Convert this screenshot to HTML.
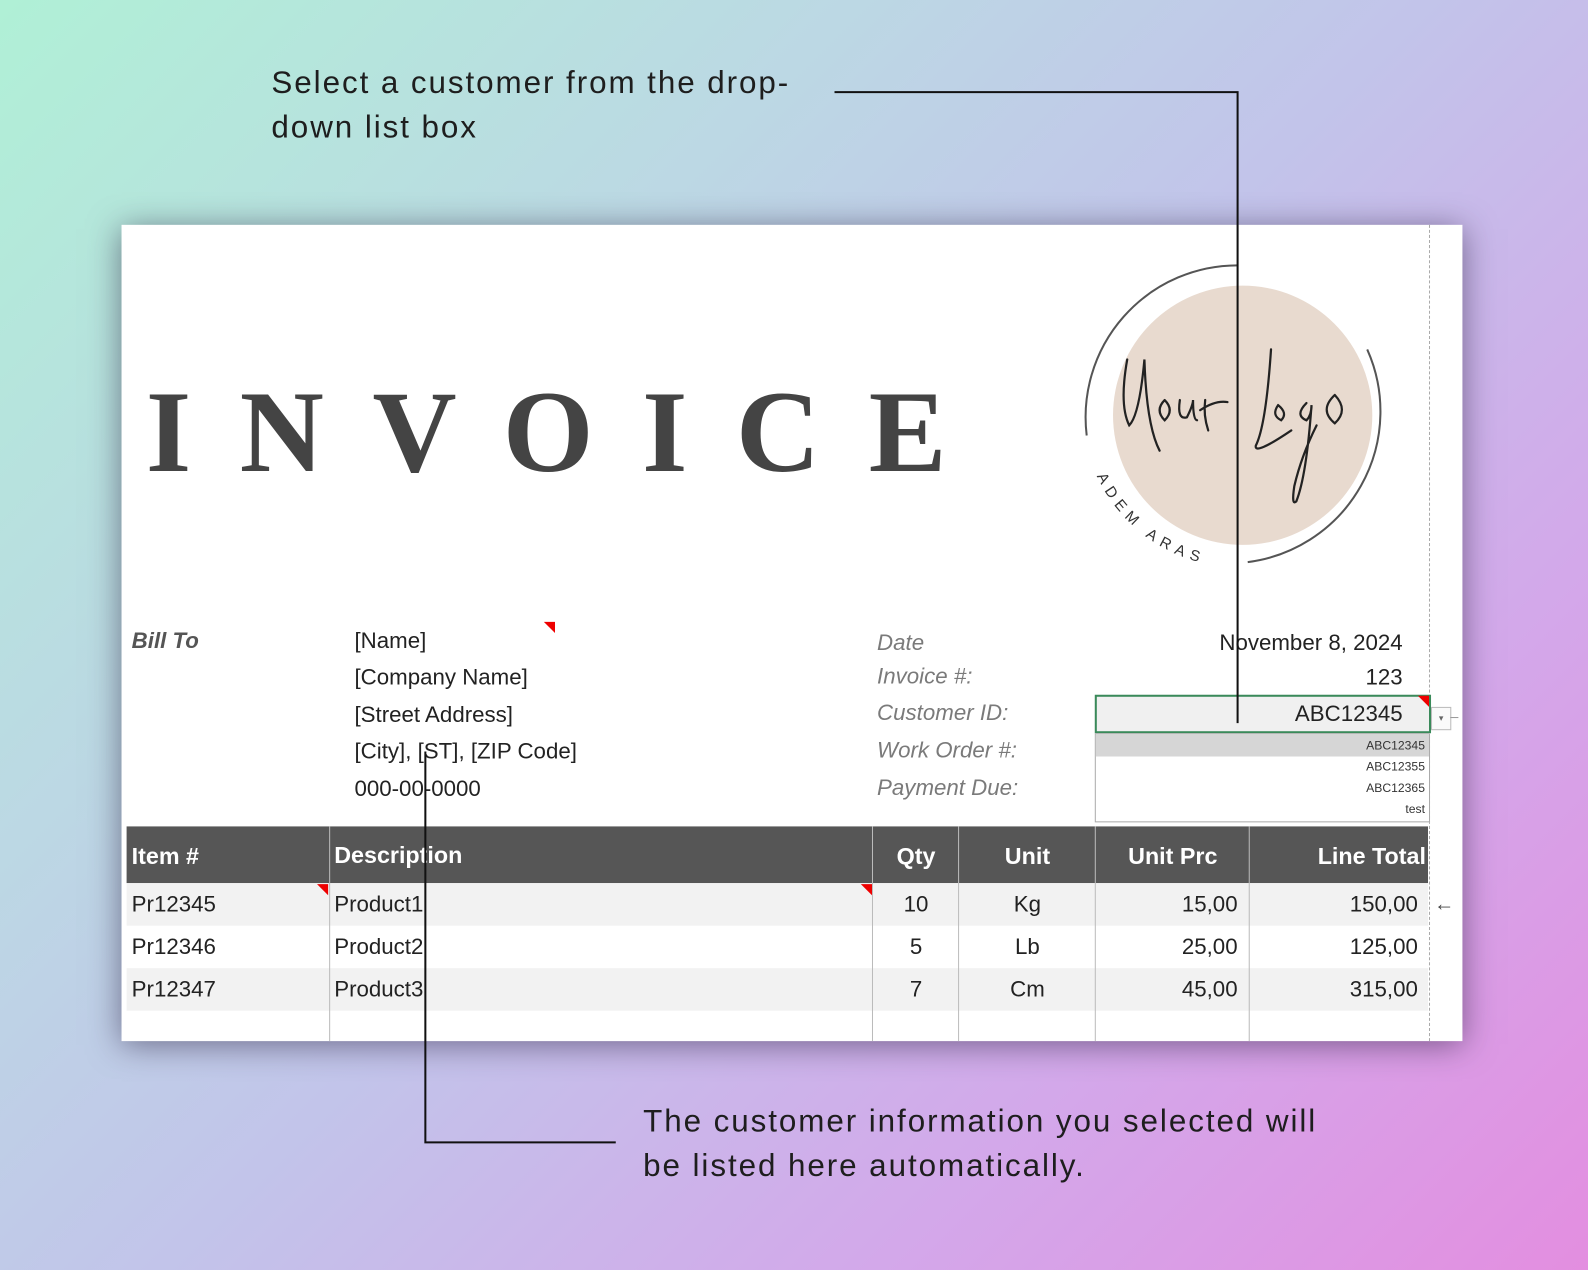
<!DOCTYPE html>
<html><head><meta charset="utf-8"><style>
html,body{margin:0;padding:0;width:1588px;height:1270px;overflow:hidden}
#w{position:absolute;left:0;top:0;width:1568px;height:1254px;transform:scale(1.01276);transform-origin:0 0;
background:linear-gradient(135deg,#b0f0d6 0%,#bcd8e4 30%,#c2c4ea 50%,#d3a8ea 75%,#e38ee0 100%);font-family:"Liberation Sans",sans-serif}
.a{position:absolute;white-space:nowrap}
#card{position:absolute;left:120px;top:222px;width:1324px;height:806px;background:#fff;box-shadow:0 4px 30px rgba(40,30,60,.55)}
.ann{font-size:31px;color:#1e1e1e;letter-spacing:1.9px;line-height:44px}
.t{font-size:22px;color:#222;line-height:26px}
.l{font-size:22px;color:#7a7a7a;font-style:italic;line-height:26px}
.hd{font-size:23px;color:#fff;font-weight:bold;line-height:26px}
</style></head><body><div id="w">
<div class="a ann" style="left:268px;top:60px">Select a customer from the drop-<br>down list box</div>
<div class="a ann" style="left:635px;top:1085px">The customer information you selected will<br>be listed here automatically.</div>
<div id="card"></div>
<div class="a" style="left:1411px;top:222px;height:806px;border-left:1px dashed #aaa"></div>
<div class="a" style="left:144px;top:347px;font-family:'Liberation Serif',serif;font-weight:bold;font-size:115px;color:#444;letter-spacing:48px;line-height:160px">INVOICE</div>
<svg class="a" style="left:1040px;top:240px" width="360" height="340" viewBox="1040 240 360 340">
<circle cx="1227" cy="410" r="128" fill="#e8dacf"/>
<path d="M1222 262 A150 150 0 0 0 1073 430" fill="none" stroke="#555" stroke-width="2"/>
<path d="M1350 345 A150 150 0 0 1 1232 555" fill="none" stroke="#555" stroke-width="2"/>
<g fill="none" stroke="#222" stroke-width="2.2" stroke-linecap="round">
<path d="M1113 355 Q1105 400 1115 420 Q1125 410 1130 355 Q1132 420 1145 445"/>
<path d="M1150 395 Q1140 405 1150 415 Q1160 405 1150 395"/>
<path d="M1165 395 Q1162 415 1172 412 Q1178 400 1178 395 Q1178 415 1182 415"/>
<path d="M1190 395 Q1188 410 1193 425 M1185 405 Q1200 395 1212 397"/>
<path d="M1255 345 Q1250 420 1240 440 Q1238 450 1275 425"/>
<path d="M1262 400 Q1255 410 1265 415 Q1272 408 1262 400"/>
<path d="M1290 398 Q1278 410 1290 415 Q1295 410 1295 400 Q1290 470 1280 495 Q1275 500 1278 480 Q1285 450 1300 420"/>
<path d="M1318 390 Q1302 405 1318 418 Q1332 405 1318 390"/>
</g>
<text font-family="Liberation Sans" font-size="15" fill="#333" letter-spacing="6">
<textPath href="#arc">ADEM ARAS</textPath></text>
<path id="arc" d="M1083 470 A155 155 0 0 0 1215 560" fill="none"/>
</svg>
<div class="a" style="left:130px;top:620px;font-size:22px;font-weight:bold;font-style:italic;color:#555;line-height:26px">Bill To</div>
<div class="a t" style="left:350px;top:620px">[Name]</div>
<div class="a t" style="left:350px;top:656px">[Company Name]</div>
<div class="a t" style="left:350px;top:693px">[Street Address]</div>
<div class="a t" style="left:350px;top:729px">[City], [ST], [ZIP Code]</div>
<div class="a t" style="left:350px;top:766px">000-00-0000</div>
<div class="a" style="left:537px;top:614px;width:0;height:0;border-left:11px solid transparent;border-top:11px solid #e00"></div>
<div class="a l" style="left:866px;top:622px">Date</div>
<div class="a l" style="left:866px;top:655px">Invoice #:</div>
<div class="a l" style="left:866px;top:691px">Customer ID:</div>
<div class="a l" style="left:866px;top:728px">Work Order #:</div>
<div class="a l" style="left:866px;top:765px">Payment Due:</div>
<div class="a t" style="right:183px;top:622px">November 8, 2024</div>
<div class="a t" style="right:183px;top:656px">123</div>
<div class="a" style="left:1081px;top:686px;width:328px;height:34px;border:2px solid #3a8a5a;background:#f0f0f0"></div>
<div class="a t" style="right:183px;top:692px">ABC12345</div>
<div class="a" style="left:1400px;top:687px;border-left:11px solid transparent;border-top:11px solid #e00"></div>
<div class="a" style="left:1413px;top:698px;width:18px;height:21px;border:1px solid #bbb;background:#fafafa;font-size:9px;text-align:center;line-height:21px;color:#666">▾</div>
<div class="a" style="left:1432px;top:708px;width:8px;border-top:1px solid #999"></div>
<div class="a" style="left:1081px;top:724px;width:329px;height:86px;border:1px solid #aaa;background:#fff;font-size:12px;color:#333;text-align:right">
<div style="background:#d6d6d6;height:22px;line-height:22px;padding-right:4px">ABC12345</div>
<div style="height:21px;line-height:21px;padding-right:4px">ABC12355</div>
<div style="height:21px;line-height:21px;padding-right:4px">ABC12365</div>
<div style="height:21px;line-height:21px;padding-right:4px">test</div></div>
<div class="a" style="left:125px;top:816px;width:1285px;height:56px;background:#565656"></div>
<div class="a" style="left:125px;top:872px;width:1285px;height:42px;background:#f2f2f2"></div>
<div class="a" style="left:125px;top:956px;width:1285px;height:42px;background:#f2f2f2"></div>
<div class="a" style="left:325px;top:816px;height:212px;border-left:1px solid #bbb"></div>
<div class="a" style="left:861px;top:816px;height:212px;border-left:1px solid #bbb"></div>
<div class="a" style="left:946px;top:816px;height:212px;border-left:1px solid #bbb"></div>
<div class="a" style="left:1081px;top:816px;height:212px;border-left:1px solid #bbb"></div>
<div class="a" style="left:1233px;top:816px;height:212px;border-left:1px solid #bbb"></div>
<div class="a hd" style="left:130px;top:832px">Item #</div>
<div class="a hd" style="left:330px;top:831px">Description</div>
<div class="a hd" style="left:862px;width:85px;text-align:center;top:832px">Qty</div>
<div class="a hd" style="left:947px;width:135px;text-align:center;top:832px">Unit</div>
<div class="a hd" style="left:1082px;width:152px;text-align:center;top:832px">Unit Prc</div>
<div class="a hd" style="right:160px;top:832px">Line Total</div>
<div class="a" style="left:313px;top:873px;border-left:11px solid transparent;border-top:11px solid #e00"></div>
<div class="a" style="left:850px;top:873px;border-left:11px solid transparent;border-top:11px solid #e00"></div>
<div class="a t" style="left:130px;top:880px">Pr12345</div><div class="a t" style="left:330px;top:880px">Product1</div>
<div class="a t" style="left:862px;width:85px;text-align:center;top:880px">10</div><div class="a t" style="left:947px;width:135px;text-align:center;top:880px">Kg</div>
<div class="a t" style="right:346px;top:880px">15,00</div><div class="a t" style="right:168px;top:880px">150,00</div>
<div class="a t" style="left:130px;top:922px">Pr12346</div><div class="a t" style="left:330px;top:922px">Product2</div>
<div class="a t" style="left:862px;width:85px;text-align:center;top:922px">5</div><div class="a t" style="left:947px;width:135px;text-align:center;top:922px">Lb</div>
<div class="a t" style="right:346px;top:922px">25,00</div><div class="a t" style="right:168px;top:922px">125,00</div>
<div class="a t" style="left:130px;top:964px">Pr12347</div><div class="a t" style="left:330px;top:964px">Product3</div>
<div class="a t" style="left:862px;width:85px;text-align:center;top:964px">7</div><div class="a t" style="left:947px;width:135px;text-align:center;top:964px">Cm</div>
<div class="a t" style="right:346px;top:964px">45,00</div><div class="a t" style="right:168px;top:964px">315,00</div>
<div class="a" style="left:1416px;top:882px;font-size:20px;color:#444">←</div>
<svg class="a" style="left:0;top:0" width="1568" height="1254">
<path d="M824 91 H1222 V714" fill="none" stroke="#111" stroke-width="2"/>
<path d="M420 742 V1128 H608" fill="none" stroke="#111" stroke-width="2"/>
</svg>
</div></body></html>
